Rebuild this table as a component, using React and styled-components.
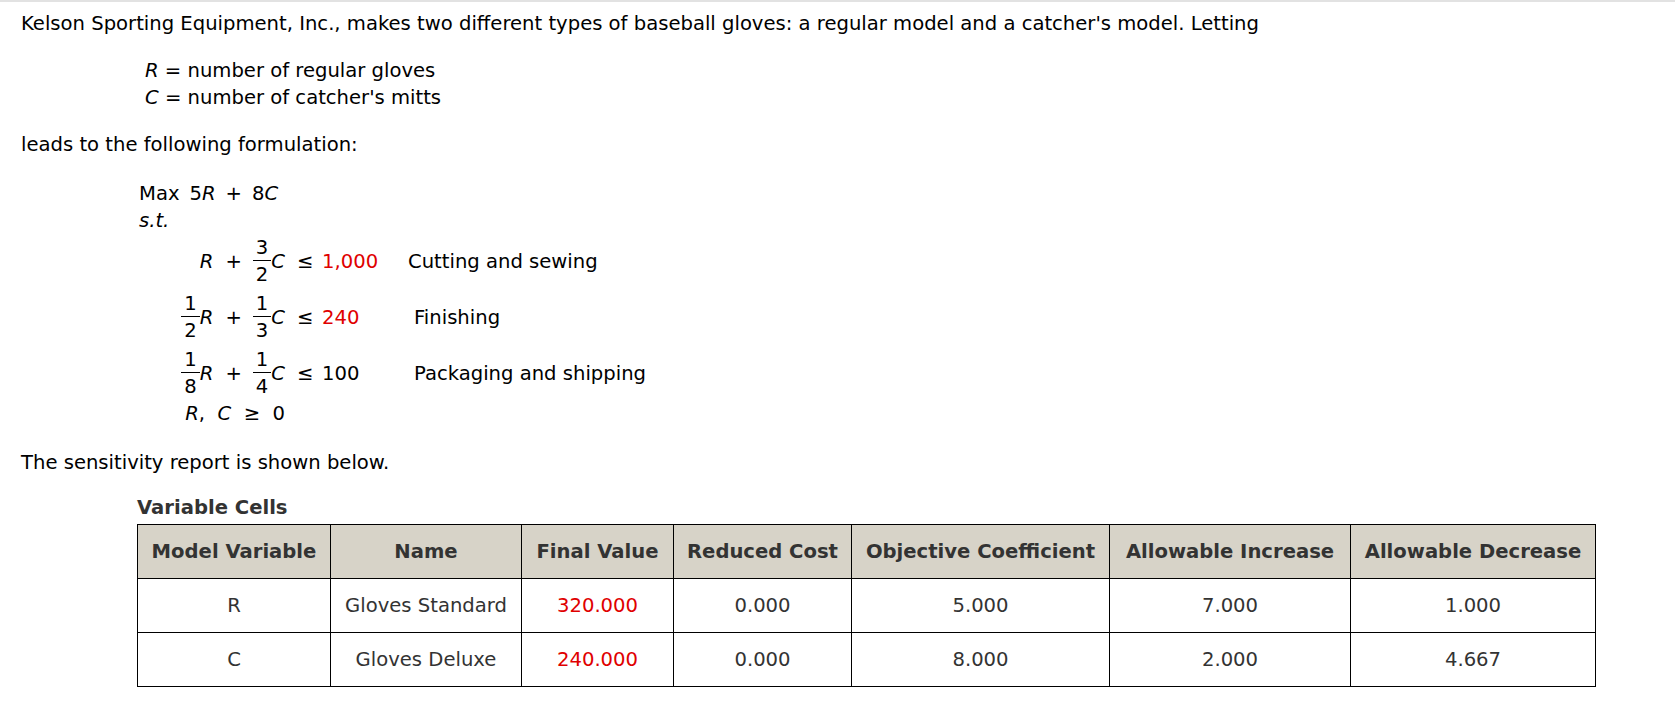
import React from "react";
import styled, { createGlobalStyle } from "styled-components";

const GlobalStyle = createGlobalStyle`
  html, body {
    margin: 0;
    padding: 0;
    background: #fff;
  }
  body {
    font-family: "DejaVu Sans", Verdana, sans-serif;
    font-size: 19.6px;
    color: #000;
  }
`;

const Page = styled.div`
  border-top: 2px solid #e2e2e2;
  padding: 8px 20px 20px 21px;
`;

const Para = styled.p`
  margin: 0;
  line-height: 27px;
`;

const Defs = styled.div`
  margin: 20px 0 20px 124px;
  line-height: 27px;
`;

const Var = styled.i`
  font-style: italic;
`;

const Formulation = styled.div`
  margin: 22px 0 0 118px;
  line-height: 27px;
`;

const ObjLine = styled.div`
  display: flex;
  gap: 10px;
`;

const Constraints = styled.div`
  display: grid;
  grid-template-columns: 104px 13px 80px auto;
  grid-template-rows: 56px 56px 56px 24px;
  column-gap: 12px;
  align-items: center;
  margin: -1px 0 0 42px;
`;

const Lhs = styled.div`
  display: flex;
  align-items: center;
  justify-content: flex-end;
  white-space: nowrap;
`;

const Op = styled.span`
  margin: 0 11px 0 12px;
`;

const Rel = styled.span``;

const Rhs = styled.span`
  color: ${p => (p.$red ? "#e00000" : "#000")};
`;

const Label = styled.span`
  margin-left: ${p => p.$shift || 0}px;
`;

const Frac = styled.span`
  display: inline-flex;
  flex-direction: column;
  align-items: stretch;
  text-align: center;
  margin-top: 2px;
`;

const Num = styled.span`
  border-bottom: 1px solid #000;
  padding: 0 3px;
  line-height: 24px;
`;

const Den = styled.span`
  padding: 0 3px;
  line-height: 27px;
`;

const Section = styled.div`
  margin: 24px 0 0 0;
`;

const TableTitle = styled.h4`
  margin: 18px 0 3px 116px;
  font-size: 19.6px;
  font-weight: bold;
  color: #333;
  line-height: 27px;
`;

const Table = styled.table`
  margin-left: 116px;
  border-collapse: collapse;
  color: #333;
  table-layout: fixed;
`;

const Th = styled.th`
  background: #d7d3c8;
  border: 1px solid #000;
  height: 53px;
  padding: 0;
  font-weight: bold;
  text-align: center;
  width: ${p => p.$w}px;
`;

const Td = styled.td`
  border: 1px solid #000;
  height: 53px;
  padding: 0;
  text-align: center;
  color: ${p => (p.$red ? "#e00000" : "#333")};
`;

const Fraction = ({ n, d }) => (
  <Frac>
    <Num>{n}</Num>
    <Den>{d}</Den>
  </Frac>
);

const columns = [
  { title: "Model Variable", w: 192 },
  { title: "Name", w: 190 },
  { title: "Final Value", w: 151 },
  { title: "Reduced Cost", w: 177 },
  { title: "Objective Coefficient", w: 257 },
  { title: "Allowable Increase", w: 240 },
  { title: "Allowable Decrease", w: 244 },
];

const rows = [
  ["R", "Gloves Standard", "320.000", "0.000", "5.000", "7.000", "1.000"],
  ["C", "Gloves Deluxe", "240.000", "0.000", "8.000", "2.000", "4.667"],
];

export default function App() {
  return (
    <>
      <GlobalStyle />
      <Page>
        <Para>
          Kelson Sporting Equipment, Inc., makes two different types of baseball gloves: a regular
          model and a catcher's model. Letting
        </Para>
        <Defs>
          <div><Var>R</Var> = number of regular gloves</div>
          <div><Var>C</Var> = number of catcher's mitts</div>
        </Defs>
        <Para>leads to the following formulation:</Para>
        <Formulation>
          <ObjLine>
            <span>Max</span>
            <span>5<Var>R</Var></span>
            <span>+</span>
            <span>8<Var>C</Var></span>
          </ObjLine>
          <div><Var>s.t.</Var></div>
          <Constraints>
            <Lhs>
              <Var>R</Var><Op>+</Op><Fraction n="3" d="2" /><Var>C</Var>
            </Lhs>
            <Rel>≤</Rel>
            <Rhs $red>1,000</Rhs>
            <Label $shift={-6}>Cutting and sewing</Label>

            <Lhs>
              <Fraction n="1" d="2" /><Var>R</Var><Op>+</Op><Fraction n="1" d="3" /><Var>C</Var>
            </Lhs>
            <Rel>≤</Rel>
            <Rhs $red>240</Rhs>
            <Label>Finishing</Label>

            <Lhs>
              <Fraction n="1" d="8" /><Var>R</Var><Op>+</Op><Fraction n="1" d="4" /><Var>C</Var>
            </Lhs>
            <Rel>≤</Rel>
            <Rhs>100</Rhs>
            <Label>Packaging and shipping</Label>

            <Lhs>
              <Var>R</Var>,&nbsp;&nbsp;<Var>C</Var>&nbsp;&nbsp;≥&nbsp;&nbsp;0
            </Lhs>
          </Constraints>
        </Formulation>
        <Section>
          <Para>The sensitivity report is shown below.</Para>
        </Section>
        <TableTitle>Variable Cells</TableTitle>
        <Table>
          <thead>
            <tr>
              {columns.map(c => (
                <Th key={c.title} $w={c.w}>{c.title}</Th>
              ))}
            </tr>
          </thead>
          <tbody>
            {rows.map(r => (
              <tr key={r[0]}>
                {r.map((v, i) => (
                  <Td key={i} $red={i === 2}>{v}</Td>
                ))}
              </tr>
            ))}
          </tbody>
        </Table>
      </Page>
    </>
  );
}
